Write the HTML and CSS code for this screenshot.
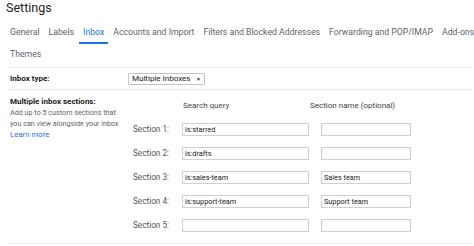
FILE: index.html
```html
<!DOCTYPE html>
<html>
<head>
<meta charset="utf-8">
<link rel="stylesheet" href="styles.css">
</head>
<body>
<div class="page">
  <div class="title">Settings</div>
  <nav class="tabs">
    <span class="tab">General</span>
    <span class="tab">Labels</span>
    <span class="tab active">Inbox</span>
    <span class="tab">Accounts and Import</span>
    <span class="tab">Filters and Blocked Addresses</span>
    <span class="tab">Forwarding and POP/IMAP</span>
    <span class="tab">Add-ons</span>
    <span class="tab">Themes</span>
  </nav>
  <div class="content">
    <div class="row type-row">
      <div class="row-label">Inbox type:</div>
      <div class="select">Multiple Inboxes <span class="caret">▼</span></div>
    </div>
    <div class="row sections-row">
      <div class="left">
        <div class="row-label">Multiple inbox sections:</div>
        <div class="desc">Add up to 5 custom sections that<br>you can view alongside your inbox</div>
        <a class="link">Learn more</a>
      </div>
      <div class="grid">
        <div></div>
        <div class="col-head">Search query</div>
        <div class="col-head">Section name (optional)</div>

        <div class="sec-label">Section 1:</div>
        <div class="field">is:starred</div>
        <div class="field"></div>

        <div class="sec-label">Section 2:</div>
        <div class="field">is:drafts</div>
        <div class="field"></div>

        <div class="sec-label">Section 3:</div>
        <div class="field">is:sales-team</div>
        <div class="field">Sales team</div>

        <div class="sec-label">Section 4:</div>
        <div class="field">is:support-team</div>
        <div class="field">Support team</div>

        <div class="sec-label">Section 5:</div>
        <div class="field"></div>
        <div class="field"></div>
      </div>
    </div>
  </div>
</div>
</body>
</html>
```
FILE: styles.css
```css
html, body {
  margin: 0;
  padding: 0;
  background: #fff;
}
body {
  font-family: Roboto, "Liberation Sans", Arial, sans-serif;
  color: #202124;
  width: 474px;
  height: 246px;
  overflow: hidden;
}
.page {
  width: 474px;
}
.title {
  font-size: 12.5px;
  line-height: 16px;
  height: 22px;
  padding-left: 6px;
  color: #202124;
  box-sizing: border-box;
}
.tabs {
  display: flex;
  flex-wrap: wrap;
  column-gap: 1px;
  padding-left: 6px;
  width: 480px;
}
.tab {
  font-size: 8.7px;
  line-height: 20px;
  height: 20px;
  padding: 0 4px;
  color: #5f6368;
  border-bottom: 2px solid transparent;
  white-space: nowrap;
}
.tab.active {
  color: #1a73e8;
  border-bottom-color: #1a73e8;
}
.content {
  margin: 1px 2px 0 7px;
  border-top: 1px solid #ececec;
}
.row {
  display: flex;
  border-bottom: 1px solid #ececec;
}
.row-label {
  font-size: 8px;
  font-weight: 700;
  color: #202124;
}
.type-row {
  height: 21px;
  align-items: center;
  padding-left: 3px;
}
.type-row .row-label {
  width: 118px;
}
.select {
  font-size: 8px;
  line-height: 10px;
  height: 10px;
  padding: 0 3px;
  width: 69px;
  border: 1px solid #c4c4c4;
  border-radius: 1px;
  color: #202124;
  display: flex;
  align-items: center;
  justify-content: space-between;
  white-space: nowrap;
}
.caret {
  font-size: 5px;
  color: #333;
}
.sections-row {
  height: 153px;
  padding-left: 3px;
}
.left {
  width: 118px;
  padding-top: 6px;
}
.left .row-label {
  line-height: 11px;
}
.desc {
  font-size: 7.2px;
  line-height: 11px;
  color: #5f6368;
  white-space: nowrap;
}
.link {
  display: block;
  font-size: 7.8px;
  line-height: 11px;
  color: #1a73e8;
}
.grid {
  display: grid;
  grid-template-columns: 49px 127px 102px;
  grid-template-rows: 17px repeat(5, 24px);
  padding-top: 10px;
  padding-left: 5px;
  align-items: center;
}
.grid .field:nth-child(3n) {
  margin-left: 12px;
}
.col-head {
  font-size: 8px;
  color: #444;
  white-space: nowrap;
  padding-left: 1px;
  align-self: start;
  margin-top: 1px;
}
.sec-label {
  font-size: 8.2px;
  color: #555;
  white-space: nowrap;
}
.field {
  height: 11px;
  border: 1px solid #cfcfcf;
  font-size: 7.3px;
  line-height: 11px;
  padding-left: 2px;
  color: #202124;
  white-space: nowrap;
}
```
